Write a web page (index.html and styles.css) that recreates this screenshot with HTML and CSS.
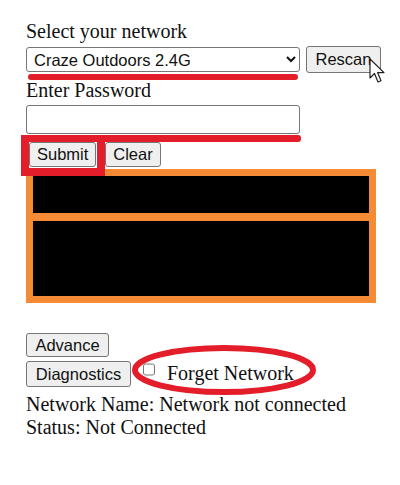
FILE: index.html
```html
<!DOCTYPE html>
<html lang="en">
<head>
    <meta charset="UTF-8">
    <meta name="viewport" content="width=device-width, initial-scale=1.0">
    <title>Wi-Fi Setup</title>
    <link rel="stylesheet" href="styles.css">
</head>
<body>
    <div class="page">
        <div class="label">Select your network</div>
        <div class="row net-row">
            <select class="net-select">
                <option>Craze Outdoors 2.4G</option>
            </select>
            <button type="button" class="btn btn-rescan">Rescan</button>
        </div>

        <div class="label pass-label">Enter Password</div>
        <input type="password" class="pass-input">

        <div class="row btn-row">
            <button type="button" class="btn btn-submit">Submit</button>
            <button type="button" class="btn">Clear</button>
        </div>

        <!-- scan results panel -->
        <div class="panel">
            <div class="panel-block"></div>
            <div class="panel-block tall"></div>
        </div>

        <div class="extra">
            <button type="button" class="btn">Advance</button>
            <div class="row diag-row">
                <button type="button" class="btn">Diagnostics</button>
                <label class="forget">
                    <input type="checkbox" class="forget-box">
                    Forget Network
                </label>
            </div>
        </div>

        <div class="info">
            <div>Network Name: Network not connected</div>
            <div>Status: Not Connected</div>
        </div>

        <!-- red markup drawn over the form -->
        <div class="mark mark-select"></div>
        <div class="mark mark-pass"></div>
        <div class="mark mark-submit"></div>
        <svg class="mark-ring" width="186" height="52" viewBox="0 0 186 52">
            <ellipse cx="93" cy="26" rx="89" ry="22" fill="none" stroke="#e31e2a" stroke-width="6"/>
        </svg>

        <svg class="cursor" width="18" height="27" viewBox="0 0 18 27">
            <path d="M1 1 L1 20 L5.5 15.5 L9 24 L12 22.8 L8.6 14.6 L15 14.6 Z" fill="#fff" stroke="#222" stroke-width="1.2" stroke-linejoin="round"/>
        </svg>
    </div>
</body>
</html>
```

FILE: styles.css
```css
body {
    margin: 0;
    background-color: #fff;
    font-family: "Liberation Serif", "Times New Roman", serif;
    font-size: 20px;
    line-height: 23px;
    color: #111;
}

.page {
    position: relative;
    padding: 20px 0 0 26px;
}

.row {
    display: flex;
    align-items: center;
}

.net-row {
    gap: 6px;
    margin-top: 3px;
}

.net-select {
    width: 274px;
    height: 25px;
    margin: 0;
    padding: 0 3px;
    font-family: "Liberation Sans", Arial, sans-serif;
    font-size: 16.5px;
    color: #111;
    background-color: #fff;
    border: 1px solid #767676;
    border-radius: 3px;
}

.btn {
    height: 25px;
    margin: 0;
    padding: 0 7px;
    font-family: "Liberation Sans", Arial, sans-serif;
    font-size: 16.5px;
    color: #111;
    background-color: #efefef;
    border: 1px solid #767676;
    border-radius: 3px;
}

.btn-rescan {
    height: 27px;
    width: 75px;
}

.pass-label {
    margin-top: 6px;
}

.pass-input {
    display: block;
    box-sizing: border-box;
    width: 274px;
    height: 29px;
    margin: 3px 0 0;
    border: 1px solid #767676;
    border-radius: 3px;
}

.btn-row {
    gap: 9px;
    margin-top: 8px;
    padding-left: 3px;
}

.btn-submit {
    width: 67px;
}

.btn-row .btn + .btn {
    width: 56px;
}

.panel {
    box-sizing: border-box;
    width: 350px;
    height: 134px;
    margin-top: 2px;
    padding: 7px;
    display: flex;
    flex-direction: column;
    gap: 8px;
    background-color: #f58c35;
}

.panel-block {
    height: 37px;
    background-color: #000;
}

.panel-block.tall {
    flex: 1;
}

.extra {
    margin-top: 30px;
    display: flex;
    flex-direction: column;
    gap: 4px;
}

.extra > .btn {
    width: 83px;
    height: 24px;
}

.diag-row {
    gap: 12px;
}

.diag-row .btn {
    width: 105px;
    height: 26px;
}

.forget {
    display: flex;
    align-items: center;
    gap: 12px;
    margin-top: -2px;
}

.forget-box {
    width: 12px;
    height: 13px;
    margin: 0;
    position: relative;
    top: -4px;
}

.info {
    margin-top: 6px;
}

.mark {
    position: absolute;
    background-color: #e31e2a;
}

.mark-select {
    left: 28px;
    top: 74px;
    width: 270px;
    height: 6px;
    border-radius: 3px;
}

.mark-pass {
    left: 21px;
    top: 135px;
    width: 280px;
    height: 7px;
    border-radius: 0 3px 3px 0;
}

.mark-submit {
    left: 21px;
    top: 135px;
    width: 84px;
    height: 41px;
    background-color: transparent;
    border: 8px solid #e31e2a;
    border-top-width: 7px;
    box-sizing: border-box;
}

.mark-ring {
    position: absolute;
    left: 131px;
    top: 344px;
}

.cursor {
    position: absolute;
    left: 369px;
    top: 58px;
}
```
